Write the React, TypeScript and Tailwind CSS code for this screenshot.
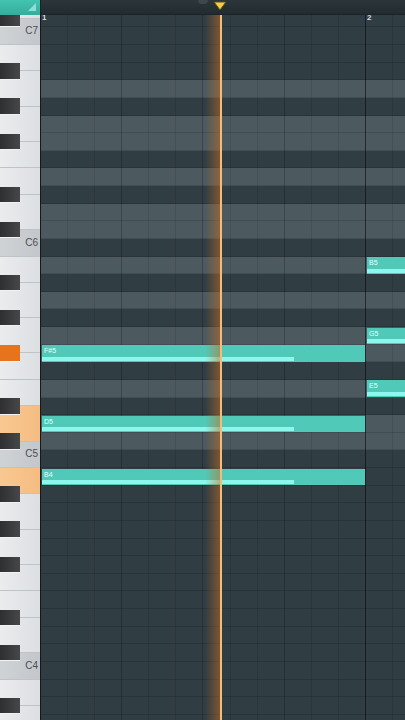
import React from 'react';

const S = 17.625;
const NAMES = ['C', 'C#', 'D', 'D#', 'E', 'F', 'F#', 'G', 'G#', 'A', 'A#', 'B'];
const SCALE = new Set([1, 2, 4, 6, 7, 9, 11]); // D major
const TOP = 97; // C#7 is the first grid row

const isBlack = (n: number) => [1, 3, 6, 8, 10].includes(n % 12);
const nameOf = (n: number) => NAMES[n % 12] + (Math.floor(n / 12) - 1);

const ACTIVE = new Set([78, 74, 71]);

const notes = [
  { n: 78, start: 0, len: 323, vel: 0.78 },
  { n: 74, start: 0, len: 323, vel: 0.78 },
  { n: 71, start: 0, len: 323, vel: 0.78 },
  { n: 83, start: 325, len: 120, vel: 1 },
  { n: 79, start: 325, len: 120, vel: 1 },
  { n: 76, start: 325, len: 120, vel: 1 },
];

const whiteKeys: number[] = [];
for (let n = 98; n >= 55; n--) if (!isBlack(n)) whiteKeys.push(n);
const keyRows: number[] = [];
for (let n = 98; n >= 55; n--) keyRows.push(n);
const gridRows: number[] = [];
for (let n = TOP; n >= 55; n--) gridRows.push(n);
const steps = Array.from({ length: 16 }, (_, i) => i);

const WhiteKey = ({ n }: { n: number }) => {
  const pc = n % 12;
  const wide = pc === 2 || pc === 7 || pc === 9;
  const isC = pc === 0;
  const active = ACTIVE.has(n);
  return (
    <div
      className={
        'flex shrink-0 items-center justify-end border-b border-[#bfc3c7] pr-[2px] ' +
        (wide ? 'h-[35.25px] ' : 'h-[26.4375px] ') +
        (active
          ? 'bg-[linear-gradient(to_right,#f9c892,#f4bd82)]'
          : isC
            ? 'bg-[linear-gradient(to_right,#d0d3d6,#c3c6ca)]'
            : 'bg-[linear-gradient(to_right,#eaecee,#dcdfe2)]')
      }
    >
      {isC && (
        <span className="text-[10px] leading-none text-[#4b4e52]">{nameOf(n)}</span>
      )}
    </div>
  );
};

const BlackKeyRow = ({ n }: { n: number }) => (
  <div className="flex h-[17.625px] shrink-0 items-center">
    {isBlack(n) && (
      <div
        className={
          'h-[16.5px] w-[19.5px] border-b border-[#f2f2f2] ' +
          (ACTIVE.has(n)
            ? 'bg-[#e8731d]'
            : 'bg-[linear-gradient(to_right,#2e2f30,#464748)]')
        }
      />
    )}
  </div>
);

const GridRow = ({ n }: { n: number }) => {
  const light = n >= 73 && n <= 93 && SCALE.has(n % 12);
  return (
    <div
      className={
        'h-[17.625px] shrink-0 border-b border-[rgba(0,0,0,0.14)] ' +
        (light ? 'bg-[#4c5a60]' : 'bg-[#303d43]')
      }
    />
  );
};

const Note = ({ n, start, len, vel }: { n: number; start: number; len: number; vel: number }) => (
  <div
    className="absolute flex h-[16.6px] flex-col justify-between overflow-hidden bg-[#50c9b9]"
    style={{ left: start + 1, top: (TOP - n) * S + 0.5, width: len }}
  >
    <span className="pl-[2px] pt-[2px] text-[7px] leading-none text-[#e4fffb]">{nameOf(n)}</span>
    <div className="mb-[1px] h-[4px] bg-[#8df7ee]" style={{ width: `${vel * 100}%` }} />
  </div>
);

export default function App() {
  return (
    <div className="flex h-[720px] w-[405px] flex-col overflow-hidden bg-[#2f3c42] font-['Liberation_Sans',Arial,sans-serif]">
      {/* header */}
      <div className="relative z-20 flex h-[15px] shrink-0">
        <div className="relative w-[40px] shrink-0 bg-[linear-gradient(to_bottom,#43c3b1,#35ad9d)]">
          <svg className="absolute left-[28px] top-[3px]" width="9" height="8" viewBox="0 0 9 8">
            <polygon points="8,0 8,8 0,8" fill="#8fded3" />
          </svg>
        </div>
        <div className="w-px shrink-0 bg-[#161b1e]" />
        <div className="relative flex flex-1 border-b border-[#1b2327] bg-[linear-gradient(to_bottom,#2b353a,#222b30)]">
          {[1, 2].map((b) => (
            <div key={b} className="w-[325px] shrink-0 pl-[1px] pt-[3px]">
              <span className="text-[8px] font-bold leading-none text-[#d5dce0]">{b}</span>
            </div>
          ))}
          <div className="absolute left-[157px] top-[-4px] h-[8px] w-[10px] rounded-full bg-[#3c484e]" />
          <svg className="absolute left-[172px] top-[1px]" width="14" height="10" viewBox="0 0 14 10">
            <polygon points="1,1 13,1 7,9" fill="#f7cb4a" stroke="#5b4a17" strokeWidth="1" />
          </svg>
        </div>
      </div>

      {/* body */}
      <div className="flex min-h-0 flex-1 overflow-hidden">
        <div className="relative w-[40px] shrink-0">
          <div className="mt-[-31.6875px] flex flex-col">
            {whiteKeys.map((n) => (
              <WhiteKey key={n} n={n} />
            ))}
          </div>
          <div className="absolute left-0 right-0 top-[-22.875px] flex flex-col">
            {keyRows.map((n) => (
              <BlackKeyRow key={n} n={n} />
            ))}
          </div>
        </div>
        <div className="w-px shrink-0 bg-[#14191c]" />
        <div className="relative flex-1 overflow-hidden">
          <div className="relative mt-[-5.25px]">
            <div className="flex flex-col">
              {gridRows.map((n) => (
                <GridRow key={n} n={n} />
              ))}
            </div>
            {/* vertical grid lines */}
            <div className="absolute inset-0 flex">
              {steps.map((i) => (
                <div
                  key={i}
                  className={
                    'h-full w-[27.0833px] shrink-0 border-r ' +
                    (i % 12 === 11
                      ? 'border-[rgba(0,0,0,0.55)]'
                      : i % 3 === 2
                        ? 'border-[rgba(0,0,0,0.22)]'
                        : 'border-[rgba(0,0,0,0.1)]')
                  }
                />
              ))}
            </div>
            {notes.map((nt) => (
              <Note key={nt.n} {...nt} />
            ))}
          </div>
          {/* playhead */}
          <div className="absolute bottom-0 left-[164px] top-0 flex">
            <div className="h-full w-[15px] bg-[linear-gradient(to_right,rgba(200,110,30,0),rgba(200,110,30,0.5))]" />
            <div className="h-full w-[1.5px] bg-[#f6bb78]" />
          </div>
        </div>
      </div>
    </div>
  );
}
